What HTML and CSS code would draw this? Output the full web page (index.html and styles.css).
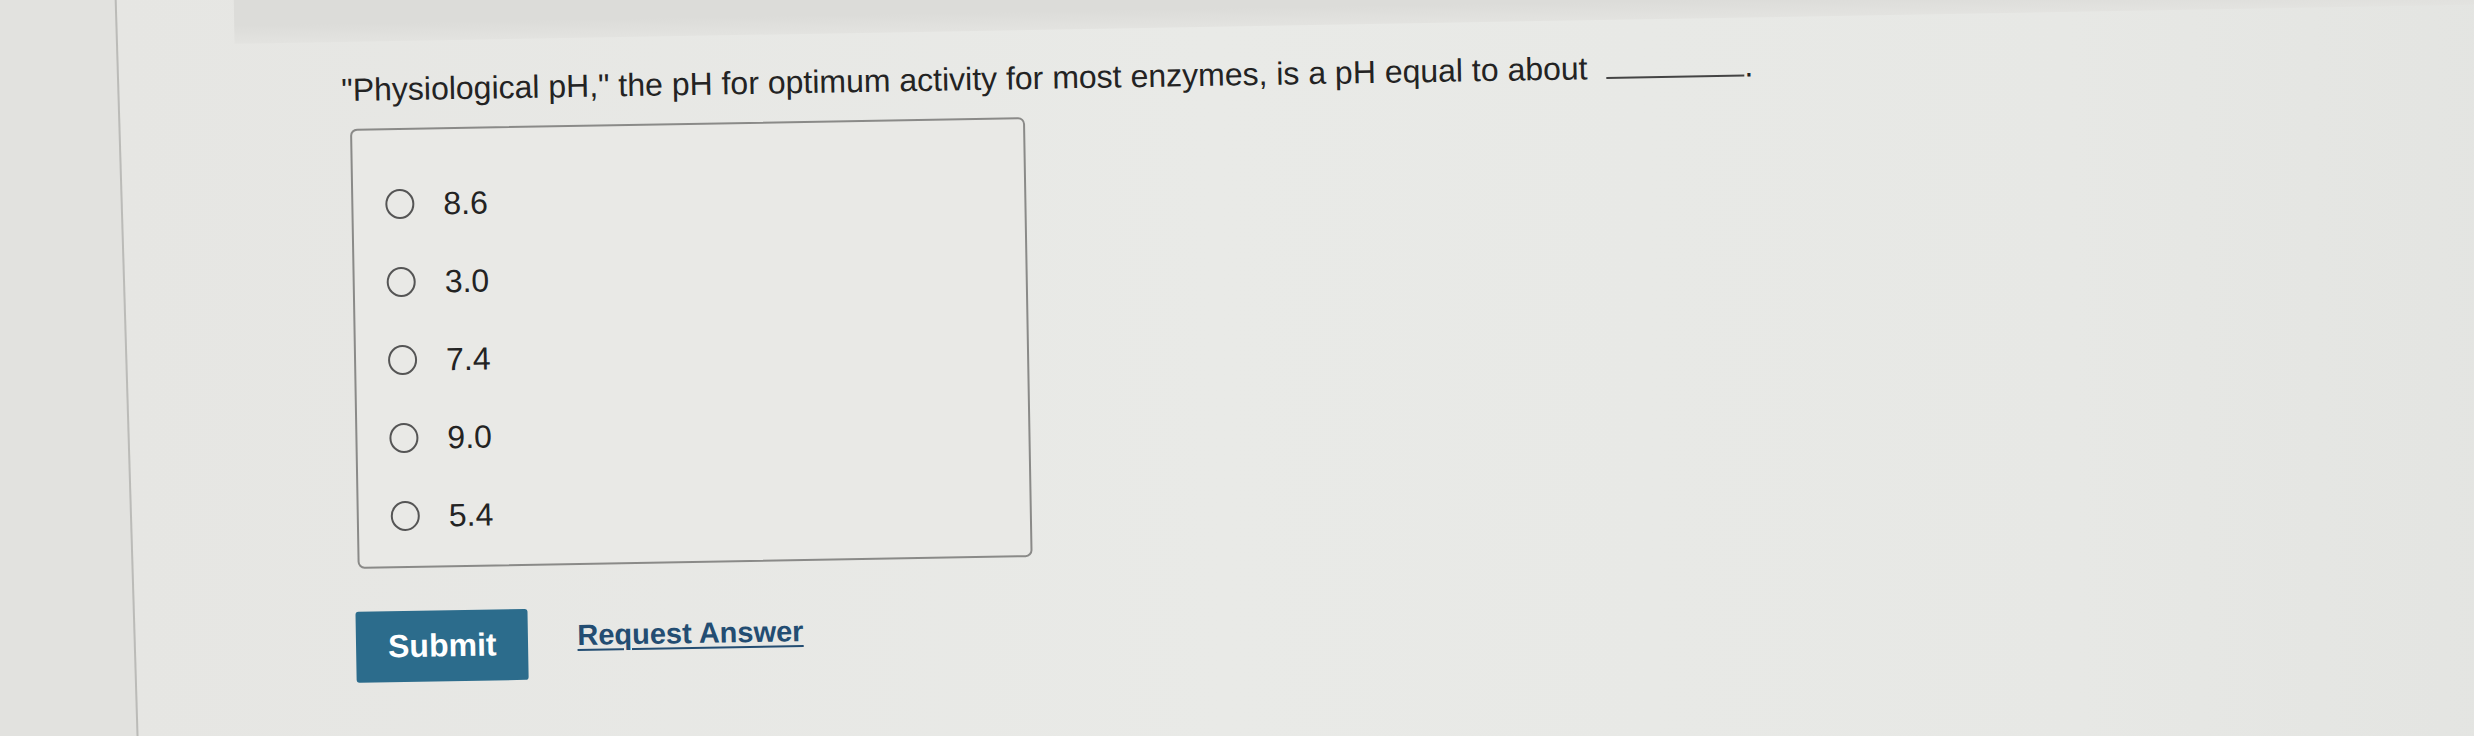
FILE: index.html
```html
<!DOCTYPE html>
<html lang="en">
<head>
  <meta charset="UTF-8">
  <meta name="viewport" content="width=device-width, initial-scale=1.0">
  <title>Question</title>
  <link rel="stylesheet" href="styles.css">
</head>
<body>
  <div class="page">
    <aside class="rail"></aside>

    <main class="content">
      <div class="topbar"></div>

      <!-- single multiple-choice item -->
      <section class="question">
        <p class="prompt">"Physiological pH," the pH for optimum activity for most enzymes, is a pH equal to about <span class="blank"></span>.</p>

        <form class="choices">
          <label class="choice"><input type="radio" name="ph" value="8.6">8.6</label>
          <label class="choice"><input type="radio" name="ph" value="3.0">3.0</label>
          <label class="choice"><input type="radio" name="ph" value="7.4">7.4</label>
          <label class="choice"><input type="radio" name="ph" value="9.0">9.0</label>
          <label class="choice"><input type="radio" name="ph" value="5.4">5.4</label>
        </form>

        <div class="actions">
          <button class="btn-submit" type="button">Submit</button>
          <a class="request" href="#">Request Answer</a>
        </div>
      </section>
    </main>
  </div>
</body>
</html>
```

FILE: styles.css
```css
html, body {
  margin: 0;
  height: 100%;
  overflow: hidden;
  background: #e6e6e3;
}
body {
  font-family: "Liberation Sans", Arial, sans-serif;
  color: #232323;
}

/* screen sits a little askew, so the sheet bleeds past the window */
.page {
  display: flex;
  width: calc(100% + 160px);
  min-height: 920px;
  margin: -80px -80px 0 -80px;
  transform: rotate(-1deg);
  transform-origin: 421px 150px;
}
.rail {
  width: 195px;
  flex: none;
  background: #e2e2df;
  border-right: 2px solid #bbbbb8;
  transform: skewX(0.7deg);
  transform-origin: top;
}
.content {
  flex: 1;
  background: linear-gradient(to right, #e6e6e3 0%, #e9eae7 45%, #e7e8e5 80%, #e3e4e1 100%);
}
.topbar {
  height: 122px;
  margin-left: 118px;
  background: linear-gradient(to bottom, #dcdcd9 85%, #e3e3e0 100%);
}

.question {
  padding-left: 224px;
}
.prompt {
  margin: 28px 0 0;
  font-size: 32px;
  line-height: 40px;
}
.blank {
  display: inline-block;
  width: 138px;
  height: 1px;
  margin-left: 10px;
  border-bottom: 2px solid #444;
}

.choices {
  display: flex;
  flex-direction: column;
  gap: 38px;
  width: 675px;
  box-sizing: border-box;
  margin: 19px 0 0 8px;
  padding: 54px 0 30px 32px;
  border: 2px solid #8a8a88;
  border-radius: 7px;
  background: #e9e9e6;
}
.choice {
  display: flex;
  align-items: center;
  gap: 29px;
  font-size: 32px;
  line-height: 40px;
}
.choice input {
  appearance: none;
  width: 29px;
  height: 30px;
  margin: 0;
  border: 2px solid #555;
  border-radius: 50%;
  background: transparent;
}

.actions {
  display: flex;
  align-items: center;
  gap: 49px;
  margin: 43px 0 0 5px;
}
.btn-submit {
  padding: 15px 32px 16px;
  border: none;
  border-radius: 3px;
  background: #2c6c8c;
  color: #fff;
  font-family: inherit;
  font-weight: bold;
  font-size: 32px;
  line-height: 40px;
}
.request {
  margin-bottom: 16px;
  color: #234d72;
  font-weight: bold;
  font-size: 29px;
  text-decoration: underline;
  text-decoration-thickness: 2px;
  text-underline-offset: 4px;
}
```
